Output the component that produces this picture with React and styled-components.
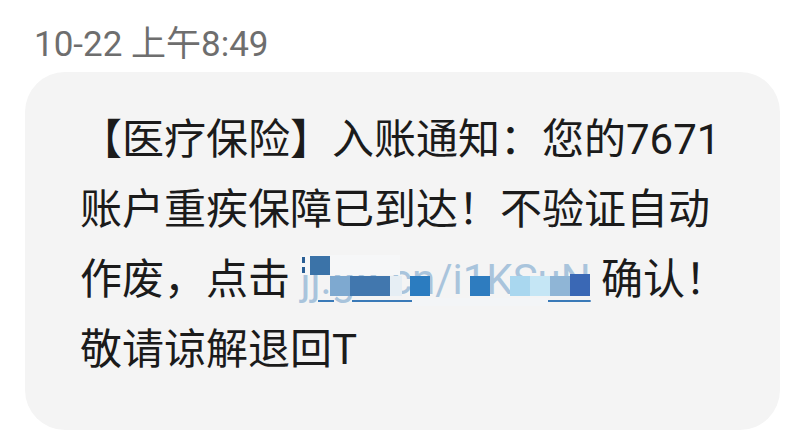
import React from "react";
import styled, { createGlobalStyle } from "styled-components";

const Global = createGlobalStyle`
  html, body { margin: 0; padding: 0; background: #ffffff; }
  body { font-family: Roboto, "Noto Sans CJK SC", sans-serif; }
`;

const Page = styled.div`
  width: 795px;
  height: 442px;
  box-sizing: border-box;
  padding: 25px 13px 0 25px;
  display: flex;
  flex-direction: column;
  overflow: hidden;
`;

const Stamp = styled.div`
  font-family: Roboto, "Noto Sans CJK SC", sans-serif;
  font-size: 35px;
  line-height: 40px;
  color: #6e6e6e;
  padding-left: 9px;
  margin-bottom: 7px;
`;

const Bubble = styled.div`
  width: 755px;
  height: 358px;
  box-sizing: border-box;
  background: #f4f4f4;
  border-radius: 40px;
  padding: 33px 20px 0 55px;
`;

const Body = styled.div`
  font-family: Roboto, "Noto Sans CJK SC", sans-serif;
  font-size: 42px;
  line-height: 70px;
  color: #1b1b1b;
  white-space: nowrap;
`;

const Link = styled.span`
  position: relative;
  display: inline-block;
  line-height: 70px;
  vertical-align: top;
  text-decoration: underline;
  text-decoration-color: #3a7ab8;
  text-decoration-thickness: 2px;
  text-underline-offset: 6px;
`;

const LinkText = styled.span`
  color: #a9c4dc;
`;

const Tile = styled.span`
  position: absolute;
  left: ${(p) => p.$x}px;
  top: ${(p) => p.$y}px;
  width: ${(p) => p.$w}px;
  height: ${(p) => p.$h}px;
  background: ${(p) => p.$c};
`;

const tiles = [
  { x: 0, y: 10, w: 100, h: 20, c: "#f6f7f8" },
  { x: 2, y: 12, w: 3, h: 6, c: "#2a5f95" },
  { x: 2, y: 22, w: 3, h: 6, c: "#2a5f95" },
  { x: 10, y: 11, w: 20, h: 19, c: "#3b73a8" },
  { x: 30, y: 31, w: 20, h: 20, c: "#7ea9d0" },
  { x: 50, y: 31, w: 40, h: 20, c: "#4177ae" },
  { x: 90, y: 31, w: 12, h: 20, c: "#e6eef4" },
  { x: 110, y: 31, w: 20, h: 20, c: "#2b7cc0" },
  { x: 112, y: 53, w: 136, h: 8, c: "#f3f5f7" },
  { x: 170, y: 31, w: 20, h: 20, c: "#2e7cbf" },
  { x: 210, y: 31, w: 20, h: 20, c: "#a9d7ef" },
  { x: 230, y: 31, w: 20, h: 20, c: "#c5e6f5" },
  { x: 250, y: 31, w: 20, h: 20, c: "#8fb5d6" },
  { x: 270, y: 29, w: 20, h: 22, c: "#3a68b5" },
];

export default function App() {
  return (
    <>
      <Global />
      <Page>
        <Stamp>10-22 上午8:49</Stamp>
        <Bubble>
          <Body>
            【医疗保险】入账通知：您的7671
            <br />
            账户重疾保障已到达！不验证自动
            <br />
            作废，点击{" "}
            <Link>
              <LinkText>jj.gd.cn/i1KSuN</LinkText>
              {tiles.map((t, i) => (
                <Tile key={i} $x={t.x} $y={t.y} $w={t.w} $h={t.h} $c={t.c} />
              ))}
            </Link>{" "}
            确认！
            <br />
            敬请谅解退回T
          </Body>
        </Bubble>
      </Page>
    </>
  );
}
